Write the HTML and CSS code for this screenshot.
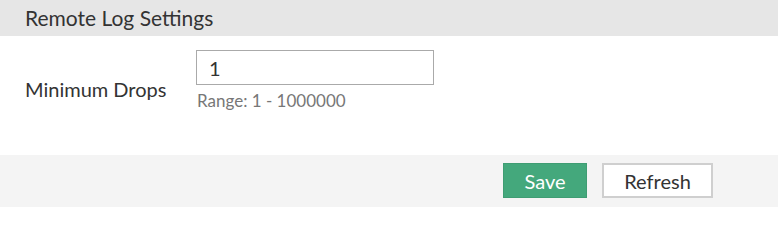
FILE: index.html
```html
<!DOCTYPE html>
<html>
<head>
  <title>Remote Log Settings</title>
  <link rel="stylesheet" href="styles.css">
</head>
<body>
  <div class="panel">
    <div class="panel-title">Remote Log Settings</div>

    <div class="panel-body">
      <div class="form-row">
        <label for="mindrops">Minimum Drops</label>
        <div class="field">
          <input type="text" id="mindrops" value="1">
          <div class="hint">Range: 1 - 1000000</div>
        </div>
      </div>
    </div>

    <div class="panel-footer">
      <button class="btn btn-save">Save</button>
      <button class="btn btn-refresh">Refresh</button>
    </div>
  </div>
</body>
</html>
```

FILE: styles.css
```css
body {
  margin: 0;
  padding: 0;
  background: #fff;
  font-family: Lato, "Open Sans", Arial, sans-serif;
  color: #333;
}

.panel-title {
  background: #e6e6e6;
  height: 36px;
  line-height: 36px;
  padding-left: 25px;
  font-size: 21px;
  color: #333;
}

.panel-body {
  height: 119px;
  box-sizing: border-box;
  padding: 14px 0 0 25px;
}

.form-row {
  display: flex;
  align-items: flex-start;
}

label {
  width: 171px;
  font-size: 20px;
  padding-top: 27px;
  color: #333;
}

input[type="text"] {
  width: 238px;
  height: 35px;
  box-sizing: border-box;
  border: 1px solid #aaa;
  padding: 0 12px;
  font-family: inherit;
  font-size: 20px;
  color: #333;
  margin: 0;
  outline: none;
}

.hint {
  font-size: 17px;
  color: #777;
  margin-top: 5px;
  padding-left: 1px;
}

.panel-footer {
  background: #f4f4f4;
  height: 52px;
  box-sizing: border-box;
  padding: 8px 65px 0 0;
  display: flex;
  justify-content: flex-end;
  gap: 15px;
}

.btn {
  height: 35px;
  font-family: inherit;
  font-size: 20px;
  border-radius: 0;
  cursor: pointer;
  margin: 0;
}

.btn-save {
  width: 84px;
  background: #44a87c;
  border: 1px solid #3f9d73;
  color: #fff;
}

.btn-refresh {
  width: 111px;
  background: #fff;
  border: 2px solid #cfcfcf;
  color: #333;
}
```
